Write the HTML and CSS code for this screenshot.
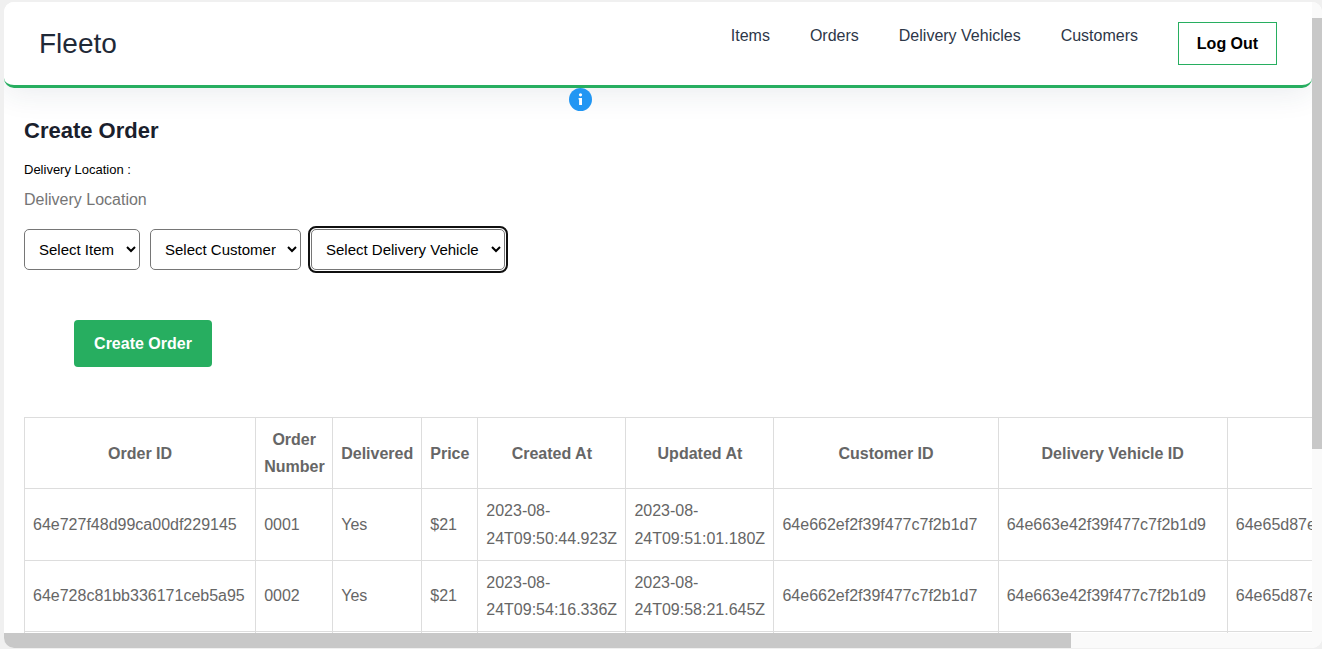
FILE: index.html
```html
<!DOCTYPE html>
<html lang="en">
<head>
<meta charset="utf-8">
<title>Fleeto</title>
<link rel="stylesheet" href="styles.css">
</head>
<body>
<div class="window">
  <div class="main">
    <div class="page">
      <header class="navbar">
        <div class="brand">Fleeto</div>
        <nav class="nav">
          <a class="nav-link">Items</a>
          <a class="nav-link">Orders</a>
          <a class="nav-link">Delivery Vehicles</a>
          <a class="nav-link">Customers</a>
          <button class="logout">Log Out</button>
        </nav>
      </header>
      <svg class="info" width="23" height="23" viewBox="0 0 23 23" aria-hidden="true">
        <circle cx="11.500" cy="11.500" r="11.500" fill="#2196f3"/>
        <circle cx="11.500" cy="6.800" r="1.600" fill="#fff"/>
        <path d="M9.600 10h3.400v7h-2.900v-5.600h-0.500z" fill="#fff"/>
      </svg>
      <main class="content">
        <h1 class="title">Create Order</h1>
        <label class="label">Delivery Location :</label>
        <input class="location" placeholder="Delivery Location">
        <div class="selects">
          <select class="select"><option>Select Item</option></select>
          <select class="select"><option>Select Customer</option></select>
          <select class="select focused"><option>Select Delivery Vehicle</option></select>
        </div>
        <button class="create">Create Order</button>
        <table class="orders">
          <colgroup>
            <col class="c1"><col class="c2"><col class="c3"><col class="c4"><col class="c5"><col class="c5"><col class="c6"><col class="c7"><col class="c7">
          </colgroup>
          <thead>
            <tr><th>Order ID</th><th>Order Number</th><th>Delivered</th><th>Price</th><th>Created At</th><th>Updated At</th><th>Customer ID</th><th>Delivery Vehicle ID</th><th>Item ID</th></tr>
          </thead>
          <tbody>
            <tr><td>64e727f48d99ca00df229145</td><td>0001</td><td>Yes</td><td>$21</td><td>2023-08-24T09:50:44.923Z</td><td>2023-08-24T09:51:01.180Z</td><td>64e662ef2f39f477c7f2b1d7</td><td>64e663e42f39f477c7f2b1d9</td><td>64e65d87e2f39f477c7f2b1d</td></tr>
            <tr><td>64e728c81bb336171ceb5a95</td><td>0002</td><td>Yes</td><td>$21</td><td>2023-08-24T09:54:16.336Z</td><td>2023-08-24T09:58:21.645Z</td><td>64e662ef2f39f477c7f2b1d7</td><td>64e663e42f39f477c7f2b1d9</td><td>64e65d87e2f39f477c7f2b1d</td></tr>
            <tr><td>64e728c81bb336171ceb5a96</td><td>0003</td><td>Yes</td><td>$21</td><td>2023-08-24T10:02:10.120Z</td><td>2023-08-24T10:04:31.500Z</td><td>64e662ef2f39f477c7f2b1d7</td><td>64e663e42f39f477c7f2b1d9</td><td>64e65d87e2f39f477c7f2b1d</td></tr>
          </tbody>
        </table>
      </main>
    </div>
    <div class="vscroll"><div class="vthumb"></div></div>
  </div>
  <div class="hscroll"><div class="hthumb"></div></div>
</div>
</body>
</html>
```
FILE: styles.css
```css
* { box-sizing: border-box; }
html, body { height: 100%; margin: 0; overflow: hidden; }
body {
  background: #f0f0f0;
  padding: 2px 0 1px 4px;
  font-family: "Liberation Sans", Arial, sans-serif;
  font-size: 16px;
}
.window {
  height: 646px;
  display: flex;
  flex-direction: column;
  background: #fff;
  border-radius: 10px;
  overflow: hidden;
}
.main { flex: 1; min-height: 0; display: flex; }
.page {
  flex: 1;
  min-width: 0;
  position: relative;
  overflow: hidden;
  background: #fff;
}
.vscroll { width: 10px; background: #fafafa; padding-top: 16px; }
.vthumb { height: 431px; background: #c8c8c8; }
.hscroll { height: 15px; background: #fafafa; flex: none; }
.hthumb { width: 1067px; height: 100%; background: #c8c8c8; }

.navbar {
  height: 86px;
  display: flex;
  justify-content: space-between;
  padding: 20px 35px 0;
  background: #fff;
  border-bottom: 3px solid #27ae60;
  border-radius: 0 0 10px 10px;
  box-shadow: 0 6px 30px rgba(30, 60, 90, 0.09);
}
.brand { font-size: 28px; line-height: 44px; color: #1f2937; }
.nav { display: flex; align-items: flex-start; }
.nav-link {
  padding: 0 20px;
  line-height: 27px;
  color: #2d3748;
}
.logout {
  width: 99px;
  height: 43px;
  margin-left: 20px;
  background: #fff;
  border: 1px solid #27ae60;
  color: #000;
  font: bold 16px "Liberation Sans", Arial, sans-serif;
}
.info { position: absolute; left: 565px; top: 86px; }

.content { padding: 28px 20px 0; }
.title {
  margin: 0;
  font-size: 22px;
  line-height: 30px;
  font-weight: bold;
  color: #1a202c;
}
.label {
  display: block;
  margin-top: 16px;
  font-size: 13px;
  line-height: 16px;
  color: #000;
}
.location {
  display: block;
  width: 300px;
  height: 30px;
  margin-top: 7px;
  padding: 0;
  border: 0;
  outline: 0;
  font: 16px "Liberation Sans", Arial, sans-serif;
}
.location::placeholder { color: #757575; }
.selects { display: flex; gap: 10px; margin-top: 14px; }
.select {
  height: 41px;
  padding: 0 8px 0 10px;
  background: #fff;
  border: 1px solid #767676;
  border-radius: 5px;
  color: #000;
  font: 15px "Liberation Sans", Arial, sans-serif;
}
.focused { padding-right: 9px; outline: 2px solid #101010; outline-offset: 1px; }
.create {
  display: block;
  width: 138px;
  height: 47px;
  margin: 50px 0 50px 50px;
  background: #27ae60;
  border: 0;
  border-radius: 4px;
  color: #fff;
  font: bold 16px "Liberation Sans", Arial, sans-serif;
}
.orders {
  width: 1433px;
  table-layout: fixed;
  border-collapse: collapse;
  color: #666;
  line-height: 27.2px;
}
.c1 { width: 231px; }
.c2 { width: 77px; }
.c3 { width: 89px; }
.c4 { width: 56px; }
.c5 { width: 148px; }
.c6 { width: 224px; }
.c7 { width: 229px; }
.orders th, .orders td { border: 1px solid #ddd; padding: 8px; overflow: hidden; }
.orders th { text-align: center; font-weight: bold; }
.orders td { text-align: left; }
```
